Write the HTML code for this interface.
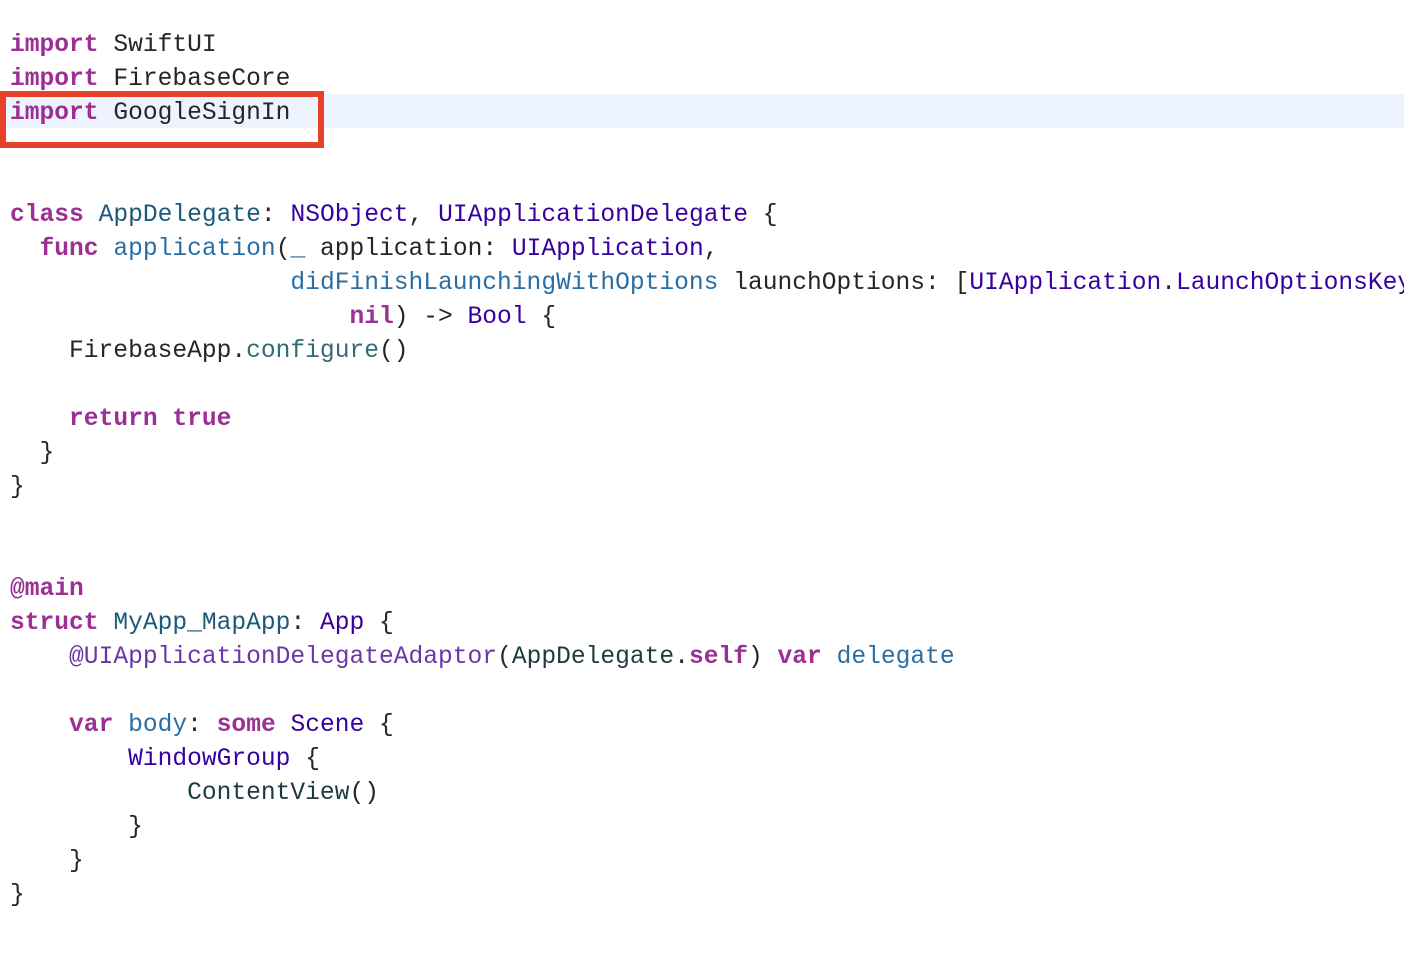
<!DOCTYPE html>
<html><head><meta charset="utf-8"><style>
html,body{margin:0;padding:0;background:#fff;width:1404px;height:978px;overflow:hidden}
pre{margin:0;padding:29px 0 0 10px;font-family:"Liberation Mono",monospace;font-size:24.6px;line-height:34px;color:#262626;position:relative;z-index:2}
.k{color:#9b2f93;font-weight:bold}
.t{color:#1c5a7a}
.c{color:#3900a0}
.f{color:#2a6ea3}
.m{color:#326d74}
.a{color:#6c36a9}
.d{color:#1f3b40}
.hl{position:absolute;left:0;top:94px;width:1404px;height:34px;background:#edf4ff;z-index:1}
.box{position:absolute;left:0;top:91px;width:312px;height:45px;border:6px solid #e8412a;z-index:3}
</style></head><body>
<div class="hl"></div>
<div class="box"></div>
<pre><span class="k">import</span> SwiftUI
<span class="k">import</span> FirebaseCore
<span class="k">import</span> GoogleSignIn


<span class="k">class</span> <span class="t">AppDelegate</span>: <span class="c">NSObject</span>, <span class="c">UIApplicationDelegate</span> {
  <span class="k">func</span> <span class="f">application</span>(<span class="f">_</span> application: <span class="c">UIApplication</span>,
                   <span class="f">didFinishLaunchingWithOptions</span> launchOptions: [<span class="c">UIApplication</span>.<span class="c">LaunchOptionsKey</span>
                       <span class="k">nil</span>) -&gt; <span class="c">Bool</span> {
    FirebaseApp.<span class="m">configure</span>()

    <span class="k">return</span> <span class="k">true</span>
  }
}


<span class="k">@main</span>
<span class="k">struct</span> <span class="t">MyApp_MapApp</span>: <span class="c">App</span> {
    <span class="a">@UIApplicationDelegateAdaptor</span>(<span class="d">AppDelegate</span>.<span class="k">self</span>) <span class="k">var</span> <span class="f">delegate</span>

    <span class="k">var</span> <span class="f">body</span>: <span class="k">some</span> <span class="c">Scene</span> {
        <span class="c">WindowGroup</span> {
            <span class="d">ContentView</span>()
        }
    }
}
</pre>
</body></html>
